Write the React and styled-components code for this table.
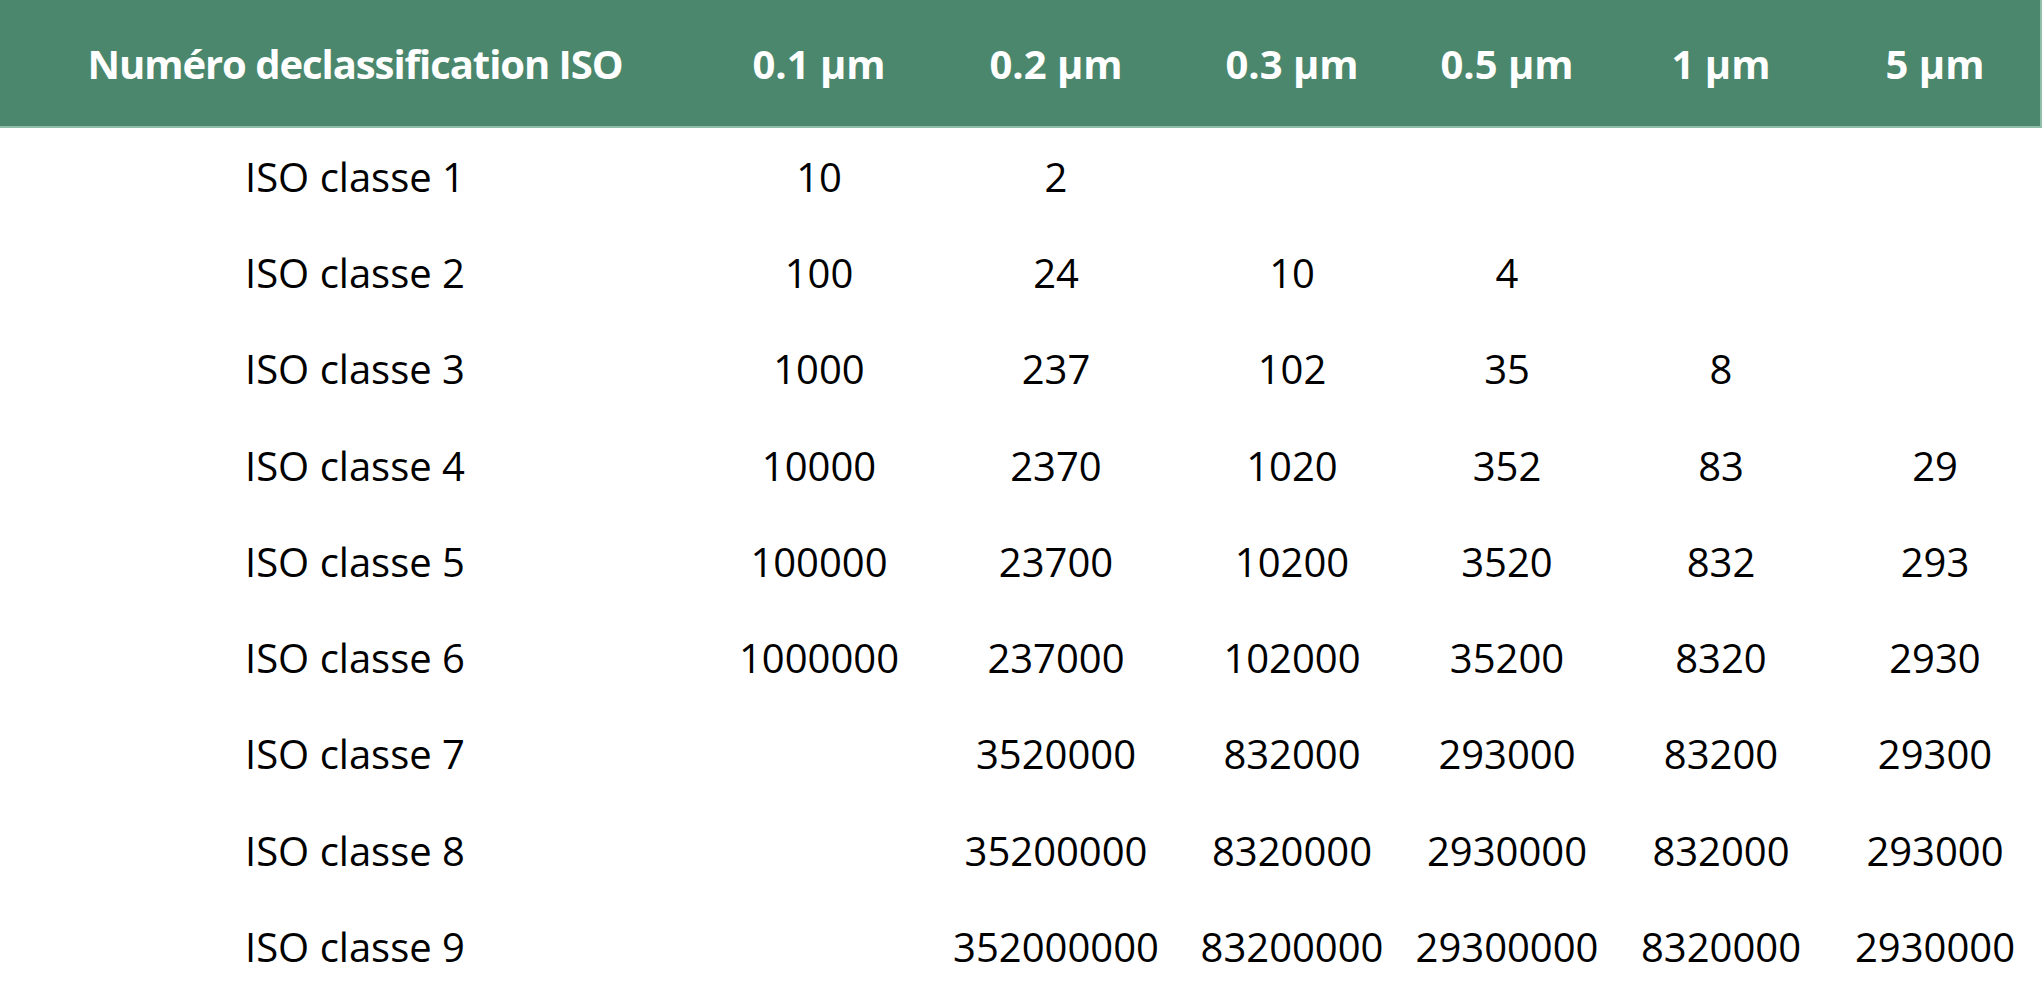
import styled, { createGlobalStyle } from "styled-components";

const GlobalStyle = createGlobalStyle`
  html, body {
    margin: 0;
    padding: 0;
    background: #ffffff;
  }
  body {
    font-family: "Open Sans", "Noto Sans", sans-serif;
    overflow: hidden;
  }
`

const columns = "710px 218px 256px 216px 214px 214px 214px"

const Table = styled.div`
  width: 2042px;
  display: flex;
  flex-direction: column;
`

const HeaderRow = styled.div`
  display: grid;
  grid-template-columns: ${columns};
  height: 128px;
  background: #4b876c;
  border-bottom: 2px solid #8fbfa8;
  border-right: 2px solid #8fbfa8;
  box-sizing: border-box;
  align-items: center;
`

const HeadCell = styled.div`
  color: #ffffff;
  font-weight: 700;
  font-size: 40px;
  text-align: center;
  white-space: nowrap;
  letter-spacing: ${(p) => (p.wide ? "-1.05px" : "0")};
`

const Row = styled.div`
  display: grid;
  grid-template-columns: ${columns};
  height: 96.3px;
  align-items: center;
`

const Cell = styled.div`
  color: #000000;
  font-size: 40px;
  text-align: center;
  white-space: nowrap;
`

const heads = ["0.1 µm", "0.2 µm", "0.3 µm", "0.5 µm", "1 µm", "5 µm"]

const rows = [
  ["ISO classe 1", "10", "2", "", "", "", ""],
  ["ISO classe 2", "100", "24", "10", "4", "", ""],
  ["ISO classe 3", "1000", "237", "102", "35", "8", ""],
  ["ISO classe 4", "10000", "2370", "1020", "352", "83", "29"],
  ["ISO classe 5", "100000", "23700", "10200", "3520", "832", "293"],
  ["ISO classe 6", "1000000", "237000", "102000", "35200", "8320", "2930"],
  ["ISO classe 7", "", "3520000", "832000", "293000", "83200", "29300"],
  ["ISO classe 8", "", "35200000", "8320000", "2930000", "832000", "293000"],
  ["ISO classe 9", "", "352000000", "83200000", "29300000", "8320000", "2930000"],
]

const App = () => {
  return (
    <>
      <GlobalStyle />
      <Table>
        <HeaderRow>
          <HeadCell wide>Numéro declassification ISO</HeadCell>
          {heads.map((h) => (
            <HeadCell key={h}>{h}</HeadCell>
          ))}
        </HeaderRow>
        {rows.map((r) => (
          <Row key={r[0]}>
            {r.map((v, i) => (
              <Cell key={i}>{v}</Cell>
            ))}
          </Row>
        ))}
      </Table>
    </>
  )
}

export default App
